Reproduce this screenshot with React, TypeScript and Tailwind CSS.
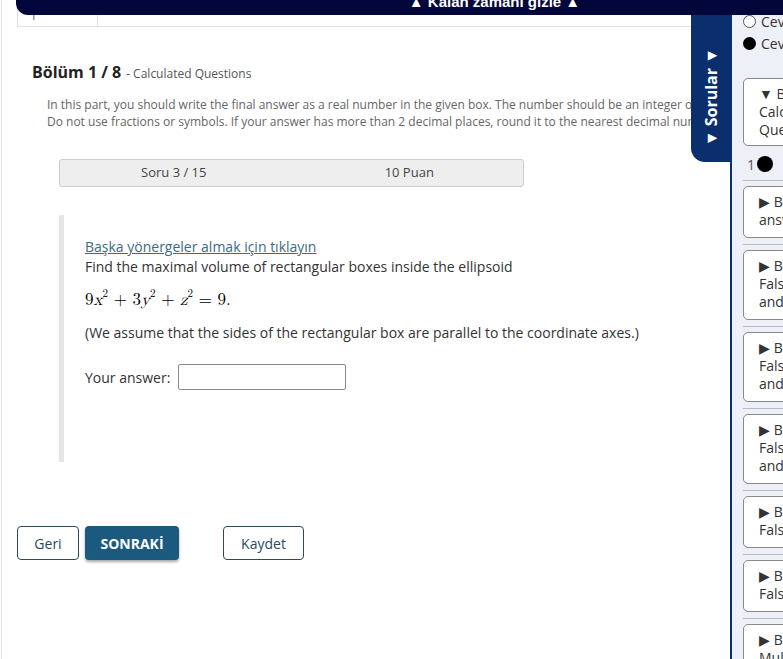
import React from 'react';

const cards: string[][] = [
    ['▶ Bölüm 2 / 8 - Short', 'answer questions'],
    ['▶ Bölüm 3 / 8 - True', 'False questions', 'and reasoning'],
    ['▶ Bölüm 4 / 8 - True', 'False questions', 'and reasoning'],
    ['▶ Bölüm 5 / 8 - True', 'False questions', 'and reasoning'],
    ['▶ Bölüm 6 / 8 - True', 'False'],
    ['▶ Bölüm 7 / 8 - True', 'False'],
    ['▶ Bölüm 8 / 8 -', 'Multiple choice'],
];

const Sidebar: React.FC = () => (
    <div className="absolute top-0 right-0 bottom-0 flex">
        <div className="mt-[15px] w-[39px] h-[147px] bg-[#0b2f6c] rounded-bl-[14px] flex flex-col items-center justify-end pb-[16px]">
            <span className="[writing-mode:vertical-rl] [text-orientation:sideways] rotate-180 whitespace-nowrap text-white font-bold text-[16px] leading-none">
                ▼ Sorular ▼
            </span>
        </div>
        <div className="w-[53px] h-full bg-[#edf1f7] border-l-2 border-[#0b2f6c] overflow-hidden text-[14px] text-[#333] pl-[11px]">
            <div className="pt-[12px] flex flex-col gap-[4px]">
                <div className="flex items-center gap-[5px] h-[18px] whitespace-nowrap">
                    <span className="w-[13px] h-[13px] rounded-full border border-[#555] bg-white shrink-0" />
                    Cevaplanmadı
                </div>
                <div className="flex items-center gap-[5px] h-[18px] whitespace-nowrap">
                    <span className="w-[13px] h-[13px] rounded-full bg-black shrink-0" />
                    Cevaplandı
                </div>
            </div>
            <div className="mt-[26px] w-[80px] h-[68px] bg-white border border-[#888] rounded-[5px] pl-[15px] pt-[6px] leading-[18px] whitespace-nowrap">
                <div>▼ Bölüm 1 / 8 -</div>
                <div>Calculated</div>
                <div>Questions</div>
            </div>
            <div className="flex items-center h-[20px] mt-[8px] pl-[4px]">
                <span className="text-[#555]">1</span>
                <span className="ml-[2px] w-[16px] h-[16px] rounded-full bg-black" />
            </div>
            {cards.map((lines, i) => (
                <div key={i}>
                    <div className="mt-[6px] h-px bg-[#b8bcc4] w-[60px]" />
                    <div className="mt-[5px] w-[80px] bg-white border border-[#888] rounded-[5px] pl-[15px] pt-[6px] pb-[8px] leading-[18px] whitespace-nowrap">
                        {lines.map((l, j) => (
                            <div key={j}>{l}</div>
                        ))}
                    </div>
                </div>
            ))}
        </div>
    </div>
);

const App: React.FC = () => {
    return (
        <div className="relative w-[783px] h-[659px] overflow-hidden bg-white font-['Open_Sans',sans-serif] text-[#333]">
            <div className="ml-px h-full border-l border-[#e4e4e4]">
                <div className="flex h-[27px] ml-[15px] border-b border-[#e2e2e2]">
                    <div className="w-[81px] border-x border-[#e2e2e2] text-[12px] leading-none pl-[12px] pt-[10px] text-[#666]">1</div>
                </div>

                <div className="mt-[33px] ml-[30px] flex items-baseline whitespace-nowrap">
                    <span className="font-bold text-[16px] text-[#222]">Bölüm 1 / 8</span>
                    <span className="ml-[5px] text-[12px] text-[#555]">- Calculated Questions</span>
                </div>

                <div className="mt-[12px] ml-[45px] text-[12px] leading-[17px] text-[#666] whitespace-nowrap">
                    <div>In this part, you should write the final answer as a real number in the given box. The number should be an integer or a decimal number.</div>
                    <div>Do not use fractions or symbols. If your answer has more than 2 decimal places, round it to the nearest decimal number with 2 places.</div>
                </div>

                <div className="mt-[29px] ml-[57px] w-[465px] h-[28px] flex items-center bg-[#eeeeee] border border-[#cccccc] rounded-[3px] text-[13px] text-[#444]">
                    <div className="flex-1 text-center pr-[8px]">Soru 3 / 15</div>
                    <div className="flex-1 text-center">10 Puan</div>
                </div>

                <div className="mt-[28px] ml-[57px] h-[247px] border-l-[5px] border-[#e6e6e6] pl-[21px] pt-[22px] text-[14px]">
                    <a href="#" className="block leading-[20px] underline text-[#3a6b85] decoration-[#3a6b85]">Başka yönergeler almak için tıklayın</a>
                    <p className="leading-[20px] text-[#333]">Find the maximal volume of rectangular boxes inside the ellipsoid</p>
                    <p className="mt-[12px] font-['Latin_Modern_Math','DejaVu_Serif','Liberation_Serif',serif] text-[17px] leading-[22px] text-black">
                        9<i>x</i><sup className="text-[11px] -top-[0.7em]">2</sup> + 3<i>y</i><sup className="text-[11px] -top-[0.7em]">2</sup> + <i>z</i><sup className="text-[11px] -top-[0.7em]">2</sup> = 9.
                    </p>
                    <p className="mt-[12px] leading-[20px] text-[#333]">(We assume that the sides of the rectangular box are parallel to the coordinate axes.)</p>
                    <div className="mt-[21px] flex items-center gap-[8px]">
                        <span>Your answer:</span>
                        <input type="text" className="w-[168px] h-[26px] border border-[#8a8a8a] rounded-[2px] bg-white outline-none px-[4px]" />
                    </div>
                </div>

                <div className="mt-[64px] ml-[15px] flex items-center text-[14px]">
                    <button className="w-[62px] h-[34px] border border-[#2b4a5e] rounded-[4px] text-[#2b4a5e] bg-white">Geri</button>
                    <button className="ml-[6px] w-[94px] h-[34px] rounded-[4px] bg-[#1b5a7e] text-white font-bold shadow-[0_2px_3px_rgba(0,0,0,0.35)]">SONRAKİ</button>
                    <button className="ml-[44px] w-[81px] h-[34px] border border-[#2b4a5e] rounded-[4px] text-[#2b4a5e] bg-white">Kaydet</button>
                </div>
            </div>

            <Sidebar />

            <div className="absolute top-0 left-[16px] right-0 h-[15px] bg-[#03063a] rounded-bl-[12px] overflow-hidden">
                <div className="-mt-[8px] text-center text-white font-bold font-['Liberation_Sans',sans-serif] text-[15px] leading-[20px] pl-[190px]">▲ Kalan zamanı gizle ▲</div>
            </div>
        </div>
    );
};

export default App;
